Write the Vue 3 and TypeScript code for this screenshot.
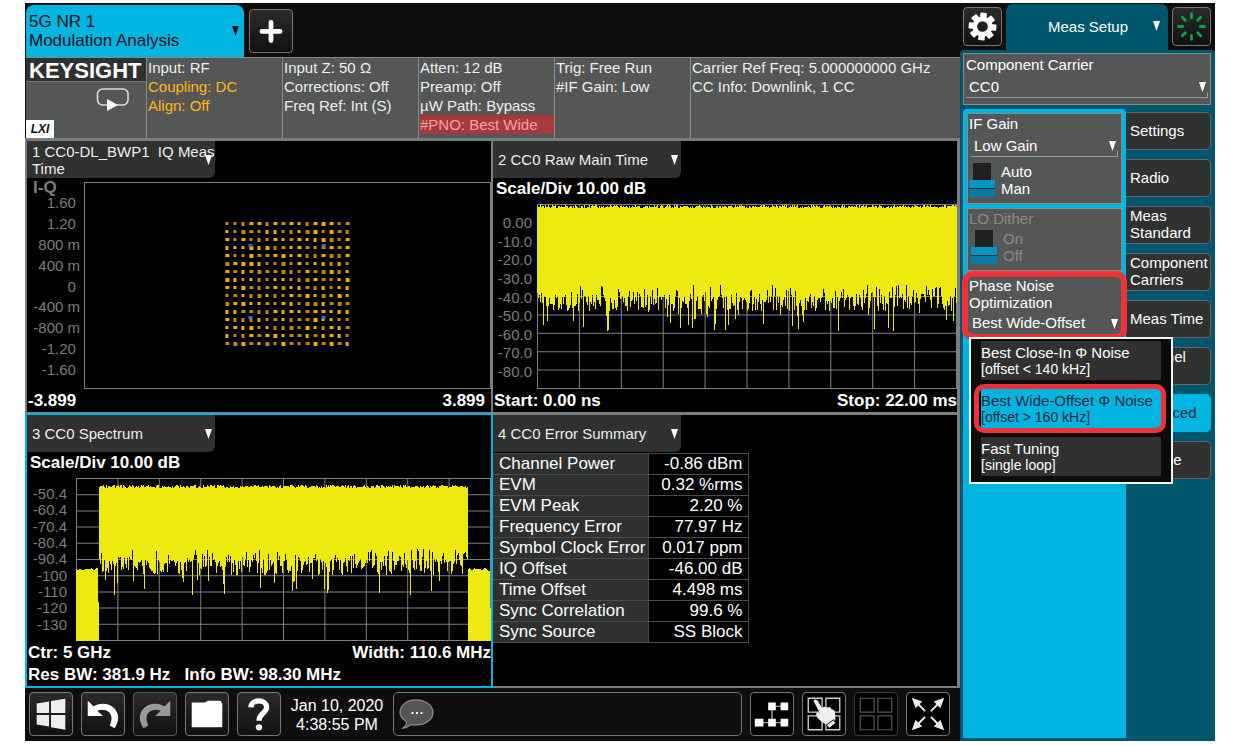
<script setup lang="ts">
import { ref } from 'vue'

interface InfoLine { text: string; tone?: 'warn' | 'alert' }

const infoCells: InfoLine[][] = [
  [{ text: 'Input: RF' }, { text: 'Coupling: DC', tone: 'warn' }, { text: 'Align: Off', tone: 'warn' }],
  [{ text: 'Input Z: 50 Ω' }, { text: 'Corrections: Off' }, { text: 'Freq Ref: Int (S)' }],
  [{ text: 'Atten: 12 dB' }, { text: 'Preamp: Off' }, { text: 'µW Path: Bypass' }, { text: '#PNO: Best Wide', tone: 'alert' }],
  [{ text: 'Trig: Free Run' }, { text: '#IF Gain: Low' }],
  [{ text: 'Carrier Ref Freq: 5.000000000 GHz' }, { text: 'CC Info: Downlink, 1 CC' }],
]

const iqLabels = ['1.60\u00a0', '1.20\u00a0', '800 m', '400 m', '0\u00a0', '-400 m', '-800 m', '-1.20\u00a0', '-1.60\u00a0']
const timeLabels = ['0.00', '-10.0', '-20.0', '-30.0', '-40.0', '-50.0', '-60.0', '-70.0', '-80.0']
const spectrumLabels = ['-50.4', '-60.4', '-70.4', '-80.4', '-90.4', '-100', '-110', '-120', '-130']

const summary: [string, string][] = [
  ['Channel Power', '-0.86 dBm'],
  ['EVM', '0.32 %rms'],
  ['EVM Peak', '2.20 %'],
  ['Frequency Error', '77.97 Hz'],
  ['Symbol Clock Error', '0.017 ppm'],
  ['IQ Offset', '-46.00 dB'],
  ['Time Offset', '4.498 ms'],
  ['Sync Correlation', '99.6 %'],
  ['Sync Source', 'SS Block'],
]

const sideTabs = ['Settings', 'Radio', 'Meas Standard', 'Component Carriers', 'Meas Time', 'Channel Setup', 'Advanced', 'Decode']
const activeTab = ref('Advanced')

const options = [
  { name: 'Best Close-In Φ Noise', note: '[offset < 140 kHz]' },
  { name: 'Best Wide-Offset Φ Noise', note: '[offset > 160 kHz]' },
  { name: 'Fast Tuning', note: '[single loop]' },
]
const chosen = ref(1)
const ifManual = ref(true)
const ditherOff = ref(true)

function makeRandom(seed: number): () => number {
  let s = seed
  return () => {
    s = (s * 1664525 + 1013904223) % 4294967296
    return s / 4294967296
  }
}

/* One-unit-wide columns: a jagged top edge and a spiky lower edge. */
function noiseBand(x0: number, x1: number, top: number, notch: number, seed: number): string {
  const rnd = makeRandom(seed)
  let path = ''
  for (let x = x0; x < x1; x += 1) {
    const y0 = top + Math.round(rnd() * 3 - 1)
    const kind = rnd()
    const depth = rnd()
    let y1 = notch + 10 + depth * 16
    if (kind < 0.28) y1 = notch + depth * 14
    else if (kind > 0.91) y1 = notch + 24 + depth * 22
    path += `M${x} ${y0}H${x + 1}V${Math.round(y1)}H${x}Z`
  }
  return path
}

function floorBand(x0: number, x1: number, top: number, bottom: number, seed: number): string {
  const rnd = makeRandom(seed)
  const pts: string[] = []
  for (let x = x0; x <= x1; x += 2) pts.push(`${x},${(top + rnd() * 3 - 1).toFixed(1)}`)
  return `M${pts.join('L')}L${x1},${bottom}L${x0},${bottom}Z`
}

const timePath = noiseBand(0, 418, 2, 81, 77)
const spectrumPath = [
  noiseBand(23, 391, 8, 71, 1234),
  floorBand(0, 23, 91, 163, 5),
  floorBand(391, 414, 91, 163, 9),
].join('')

const dotRandom = makeRandom(42)
const dots = Array.from({ length: 256 }, (_, i) => {
  const strong = dotRandom() > 0.5
  return {
    x: 141 + (i % 16) * 8,
    y: 40 + Math.floor(i / 16) * 8,
    w: dotRandom() > 0.55 ? 4 : 3,
    h: dotRandom() > 0.6 ? 4 : 3,
    fill: strong ? '#eda61d' : '#bd831a',
  }
})
const pilots = [[164, 62], [237, 62], [164, 134], [237, 134]]
const rays = [0, 45, 90, 135, 180, 225, 270, 315]
const teeth = [0, 45, 90, 135, 180, 225, 270, 315]
</script>

<template>
  <div class="analyzer">
    <main class="work">
      <header class="tabs">
        <button class="mode-tab">
          <span>5G NR 1<br>Modulation Analysis</span>
          <i class="caret"></i>
        </button>
        <button class="square" aria-label="Add screen">
          <svg viewBox="0 0 44 44"><path d="M22 13V32M12.500 22.500H31.500" stroke="#fff" stroke-width="5" stroke-linecap="round" /></svg>
        </button>
      </header>

      <section class="info">
        <div class="brand">
          <div class="brand-name">KEYSIGHT</div>
          <svg class="sweep" viewBox="0 0 34 26">
            <path d="M11 18H6.500A5 5 0 0 1 1.500 13V7A5 5 0 0 1 6.500 2H27A5 5 0 0 1 32 7V13A5 5 0 0 1 27 18H20" fill="none" stroke="#ddd" stroke-width="1.600" />
            <path d="M11 12L22 18L11 24Z" fill="#fff" />
          </svg>
          <div class="lxi">LXI</div>
        </div>
        <div v-for="(cell, c) in infoCells" :key="c" class="info-cell">
          <div v-for="line in cell" :key="line.text" :class="line.tone">{{ line.text }}</div>
        </div>
      </section>

      <section class="windows">
        <article class="window">
          <button class="title"><span>1 CC0-DL_BWP1&nbsp; IQ Meas Time</span><i class="caret"></i></button>
          <div class="plot iq">
            <div class="axis">
              <b>I-Q</b>
              <span v-for="l in iqLabels" :key="l">{{ l }}</span>
            </div>
            <svg viewBox="0 0 406 207" preserveAspectRatio="none">
              <path class="frame" d="M406 0.500H0.500V206.500H406M405.500 0V207" />
              <rect v-for="(d, i) in dots" :key="i" :x="d.x" :y="d.y" :width="d.w" :height="d.h" :fill="d.fill" />
              <rect v-for="p in pilots" :key="p.join()" :x="p[0]" :y="p[1]" width="4" height="3" fill="#2a72cc" />
            </svg>
          </div>
          <footer class="foot inset"><div><span>-3.899</span><span>3.899</span></div></footer>
        </article>

        <article class="window">
          <button class="title"><span>2 CC0 Raw Main Time</span><i class="caret"></i></button>
          <div class="scale">Scale/Div 10.00 dB</div>
          <div class="plot time">
            <div class="axis"><span v-for="l in timeLabels" :key="l">{{ l }}</span></div>
            <svg viewBox="0 0 418 185" preserveAspectRatio="none">
              <path v-for="n in 11" :key="'h' + n" class="frame" :d="`M0 ${(n - 1) * 18.4 + 0.5}H418`" />
              <path v-for="n in 11" :key="'v' + n" class="frame" :d="`M${(n - 1) * 41.700 + 0.5} 0V185`" />
              <path class="trace" :d="timePath" />
            </svg>
          </div>
          <footer class="foot"><div><span>Start: 0.00 ns</span><span>Stop: 22.00 ms</span></div></footer>
        </article>

        <article class="window active">
          <button class="title"><span>3 CC0 Spectrum</span><i class="caret"></i></button>
          <div class="scale">Scale/Div 10.00 dB</div>
          <div class="plot spectrum">
            <div class="axis"><span v-for="l in spectrumLabels" :key="l">{{ l }}</span></div>
            <svg viewBox="0 0 414 163" preserveAspectRatio="none">
              <path v-for="n in 11" :key="'h' + n" class="frame" :d="`M0 ${(n - 1) * 16.2 + 0.5}H414`" />
              <path v-for="n in 11" :key="'v' + n" class="frame" :d="`M${(n - 1) * 41.3 + 0.5} 0V163`" />
              <path class="trace" :d="spectrumPath" />
            </svg>
          </div>
          <footer class="foot">
            <div><span>Ctr: 5 GHz</span><span>Width: 110.6 MHz</span></div>
            <div><span>Res BW: 381.9 Hz&nbsp;&nbsp; Info BW: 98.30 MHz</span></div>
          </footer>
        </article>

        <article class="window">
          <button class="title"><span>4 CC0 Error Summary</span><i class="caret"></i></button>
          <table class="summary">
            <tbody>
              <tr v-for="[name, value] in summary" :key="name">
                <th scope="row">{{ name }}</th>
                <td>{{ value }}</td>
              </tr>
            </tbody>
          </table>
        </article>
      </section>

      <footer class="taskbar">
        <button class="square" aria-label="Windows">
          <svg viewBox="0 0 44 44" fill="#eee"><path d="M7 11L20 9V21H7ZM22 8.500L37 6V21H22ZM7 23H20V35L7 33ZM22 23H37V38.500L22 36Z" /></svg>
        </button>
        <button class="square" aria-label="Undo">
          <svg viewBox="0 0 44 44"><path d="M6 8L12 14C28 5 46 20 34 37L29 34C35 22 26 15 16 18.500L22 24H6Z" fill="#fff" /></svg>
        </button>
        <button class="square dim" aria-label="Redo">
          <svg viewBox="0 0 44 44"><path d="M38 8L32 14C16 5 -2 20 10 37L15 34C9 22 18 15 28 18.500L22 24H38Z" fill="#999" /></svg>
        </button>
        <button class="square" aria-label="File">
          <svg viewBox="0 0 44 44"><path d="M6 10H20L23 8H36L38 11V36H6Z" fill="#fff" /></svg>
        </button>
        <button class="square" aria-label="Help">
          <svg viewBox="0 0 44 44"><path d="M13.500 15C14 6 30 6 30 15C30 21 22 21 22 29" fill="none" stroke="#fff" stroke-width="5.500" /><circle cx="22" cy="36" r="3.300" fill="#fff" /></svg>
        </button>
        <time>Jan 10, 2020<br>4:38:55 PM</time>
        <div class="message">
          <svg viewBox="0 0 44 44">
            <path d="M9 36C12 34 13 32 12.500 29.500C8 27 6 24 6 20.500C6 13 13 8 22 8C31 8 39 13 39 20.500C39 28 31 33 22 33C20 33 18 33 17 32.500C14 35 12 36 9 36Z" fill="#555" stroke="#888" stroke-width="1.300" />
            <path d="M17.500 21H19.500M22 21H24M26.500 21H28.500" stroke="#fff" stroke-width="2" />
          </svg>
        </div>
        <button class="square black" aria-label="Sequence layout">
          <svg viewBox="0 0 44 44"><path d="M22 14H36M22 14V31M8 31H36" stroke="#aaa" stroke-width="1.500" fill="none" /><path d="M18 10H26V18H18ZM31 10H39V18H31ZM4 27H13V35H4ZM18 27H26V35H18ZM31 27H39V35H31Z" fill="#fff" /></svg>
        </button>
        <button class="square black" aria-label="Select window">
          <svg viewBox="0 0 44 44"><path d="M5.500 5.500H20V20H5.500ZM24 5.500H38.500V20H24ZM5.500 24H20V38.500H5.500ZM24 24H38.500V38.500H24Z" fill="none" stroke="#ccc" stroke-width="1.400" /><path d="M11 8C12 6 15 7 16 9L20 16C22 14 24 14 25 15.500C27 14 29 15 30 17C32 17 33 18 33.500 20L34 28L27 34C22 32 16 28 14 24C13 20 16 19 18 22Z" fill="#eee" /><path d="M24.500 33.500L32 28L34.500 31.500L27.500 37Z" fill="#eee" stroke="#000" /></svg>
        </button>
        <button class="square black faint" aria-label="Window grid">
          <svg viewBox="0 0 44 44"><path d="M5.500 5.500H20V20H5.500ZM24 5.500H38.500V20H24ZM5.500 24H20V38.500H5.500ZM24 24H38.500V38.500H24Z" fill="none" stroke="#555" stroke-width="1.300" /></svg>
        </button>
        <button class="square black" aria-label="Full screen">
          <svg viewBox="0 0 44 44"><path d="M10 10L19 19M34 10L25 19M10 34L19 25M34 34L25 25" stroke="#eee" stroke-width="2" /><path d="M5 5L16 9L9 16ZM39 5L35 16L28 9ZM5 39L9 28L16 35ZM39 39L28 35L35 28Z" fill="#eee" /></svg>
        </button>
      </footer>
    </main>

    <aside class="menu">
      <header class="menu-head">
        <button class="square small" aria-label="System settings">
          <svg viewBox="0 0 40 40">
            <rect v-for="t in teeth" :key="t" x="16.500" y="5" width="7" height="8" rx="1" fill="#fff" :transform="`rotate(${t + 5} 20 20)`" />
            <circle cx="20" cy="20" r="8.300" fill="none" stroke="#fff" stroke-width="5" />
          </svg>
        </button>
        <button class="menu-tab"><span>Meas Setup</span><i class="caret"></i></button>
        <button class="square small" aria-label="Measuring">
          <svg viewBox="0 0 40 40"><path v-for="r in rays" :key="r" d="M20 6V10.500" stroke="#00a64f" stroke-width="3" stroke-linecap="round" :transform="`rotate(${r} 20 20)`" /></svg>
        </button>
      </header>

      <div class="menu-body">
        <section class="box carrier">
          <label for="carrier">Component Carrier</label>
          <div class="pick"><select id="carrier"><option>CC0</option></select><i class="caret"></i></div>
        </section>
        <div class="columns">
          <div class="settings">
            <section class="box gain">
              <label for="gain">IF Gain</label>
              <div class="pick"><select id="gain"><option>Low Gain</option></select><i class="caret"></i></div>
              <label class="toggle"><input v-model="ifManual" type="checkbox"><span>Auto<br>Man</span></label>
            </section>
            <section class="box dither">
              <div>LO Dither</div>
              <label class="toggle"><input v-model="ditherOff" type="checkbox" disabled><span>On<br>Off</span></label>
            </section>
            <section class="box noise">
              <label for="noise">Phase Noise Optimization</label>
              <div class="pick"><select id="noise"><option>Best Wide-Offset</option></select><i class="caret"></i></div>
              <div class="popup">
                <button v-for="(o, i) in options" :key="o.name" :class="{ chosen: i === chosen }" @click="chosen = i">
                  <span>{{ o.name }}</span><small>{{ o.note }}</small>
                </button>
              </div>
            </section>
          </div>
          <nav class="side">
            <button v-for="t in sideTabs" :key="t" :class="{ on: t === activeTab }" @click="activeTab = t">{{ t }}</button>
          </nav>
        </div>
      </div>
    </aside>
  </div>
</template>

<style>
body { margin: 0; background: #fff; }
</style>

<style scoped>
* { box-sizing: border-box; }
.analyzer {
  display: flex;
  min-height: 100vh;
  padding: 3px 36px 5px 25px;
  font: 15px/17px "Liberation Sans", Arial, sans-serif;
  color: #fff;
}
button, select { font: inherit; color: inherit; margin: 0; }
button { cursor: pointer; text-align: left; }
svg { display: block; }
.work { flex: 1; min-width: 0; display: flex; flex-direction: column; background: #0e0e0e; }
.caret {
  flex: none;
  width: 7px;
  height: 10px;
  background: currentColor;
  clip-path: polygon(0 0, 100% 0, 50% 100%);
}

.tabs { display: flex; gap: 5px; height: 54px; padding: 2px 1px 0; }
.mode-tab {
  display: flex;
  align-items: center;
  justify-content: space-between;
  width: 218px;
  padding: 0 5px 0 3px;
  border: 0;
  border-radius: 8px 8px 0 0;
  background: #00b5e2;
  color: #101010;
  font-size: 17px;
  line-height: 19px;
}
.square {
  flex: none;
  width: 44px;
  height: 44px;
  padding: 0;
  border: 1px solid #777;
  border-radius: 4px;
  background: linear-gradient(#2b2b2b, #111);
}
.square svg { width: 100%; height: 100%; }
.tabs .square { margin-top: 4px; }
.square.dim { border-color: #555; }
.square.black { background: #000; }
.square.faint { border-color: #3a3a3a; }

.info { display: flex; height: 81px; background: #555756; border-top: 1px solid #888; margin-left: 1px; }
.brand { width: 120px; display: flex; flex-direction: column; }
.brand-name { height: 24px; padding-left: 3px; font-size: 22px; line-height: 25px; font-weight: bold; background: #2f3030; border-bottom: 1px solid #777; }
.sweep { width: 34px; height: 26px; margin: 5px 0 0 70px; }
.lxi { margin-top: auto; width: 28px; height: 18px; background: #fff; color: #111; font-size: 12px; line-height: 18px; font-weight: bold; font-style: italic; text-align: center; }
.info-cell { width: 136px; padding-left: 1px; border-left: 1px solid #8a8a8a; line-height: 19px; white-space: nowrap; color: #eee; }
.info-cell:last-child { flex: 1; }
.warn { color: #fdb913; }
.alert { background: #a63a3d; color: #f6a3a5; border-radius: 2px; }

.windows {
  flex: 1;
  display: grid;
  grid-template: repeat(2, minmax(0, 1fr)) / repeat(2, minmax(0, 1fr));
  gap: 3px 2px;
  padding: 3px 3px 2px 2px;
  background: #7c7d7d;
}
.window { display: flex; flex-direction: column; background: #000; min-width: 0; }
.window.active { outline: 2px solid #00b5e2; z-index: 1; }
.title {
  position: relative;
  width: 188px;
  height: 37px;
  padding: 0 0 0 5px;
  border: 0;
  border-radius: 0 0 6px 0;
  background: #303131;
  color: #eee;
}
.title span { display: block; }
.title .caret { position: absolute; right: 3px; top: 14px; color: #fff; }
.scale { height: 26px; padding-left: 3px; font-size: 17px; font-weight: bold; line-height: 22px; }
.plot { flex: 1; min-height: 0; display: grid; }
.plot svg { width: 100%; height: 100%; contain: size; overflow: hidden; }
.iq { margin-top: 4px; grid-template-columns: 57px 1fr; }
.time { grid-template-columns: 44px 1fr; }
.spectrum { grid-template-columns: 49px 1fr; }
.axis { display: flex; flex-direction: column; padding: 10px 0 8px; color: #7c7c7c; line-height: 14px; text-align: right; min-height: 0; }
.axis span { flex: 1; display: flex; align-items: center; justify-content: flex-end; white-space: pre; min-height: 0; }
.iq .axis { padding: 1px 4px 9px 6px; }
.axis b { height: 10px; line-height: 10px; font-size: 17px; text-align: left; }
.time .axis { padding-right: 5px; }
.spectrum .axis { padding: 8px 9px 8px 0; }
.frame { fill: none; stroke: #808080; stroke-width: 1; }
.trace { fill: #eeea10; shape-rendering: crispEdges; }
.foot { padding: 1px 0 0 1px; font-size: 17px; font-weight: bold; }
.foot.inset { padding-right: 6px; }
.foot div { display: flex; justify-content: space-between; line-height: 22px; white-space: nowrap; }

.summary { margin-top: 1px; align-self: flex-start; border-collapse: collapse; font-size: 17px; line-height: 20px; }
.summary th { width: 155px; padding: 0 0 0 6px; background: #2f3030; font-weight: normal; text-align: left; }
.summary td { width: 100px; padding: 0 5px 0 0; text-align: right; }
.summary th, .summary td { border: 1px solid #4a4a4a; border-left-width: 0; white-space: nowrap; }

.taskbar { display: flex; gap: 8px; height: 53px; padding: 4px 10px 0 4px; }
.taskbar time { width: 96px; font-size: 16px; line-height: 19px; text-align: center; padding-top: 4px; white-space: nowrap; }
.message { flex: 1; height: 44px; border: 1px solid #777; border-radius: 5px; }
.message svg { width: 44px; height: 44px; margin-top: -1px; }

.menu { width: 255px; flex: none; display: flex; flex-direction: column; background: #0e0e0e; }
.menu-head { display: flex; justify-content: space-between; height: 47px; padding: 1px 4px 0 3px; }
.square.small { width: 39px; height: 39px; margin-top: 3px; }
.menu-tab {
  display: flex;
  align-items: center;
  justify-content: flex-end;
  gap: 25px;
  width: 162px;
  padding: 0 8px 2px 0;
  border: 0;
  border-radius: 7px 7px 0 0;
  background: #00566d;
}
.menu-body { flex: 1; display: flex; flex-direction: column; padding: 3px 4px 3px 3px; background: #00566d; border-radius: 4px 4px 0 0; }
.box { border: 1px solid #8a8a8a; background: #555756; }
.box > label { display: block; }
.pick { position: relative; }
.pick select {
  display: block;
  appearance: none;
  width: 100%;
  height: 22px;
  padding: 0 0 0 3px;
  border: 0;
  border-bottom: 1px solid #999;
  border-radius: 0;
  background: linear-gradient(#999, #999) right bottom / 1px 5px no-repeat;
}
.pick .caret { position: absolute; right: 2px; top: 6px; }
.carrier { height: 52px; padding: 2px 2px; }
.carrier .pick { margin-top: 3px; }
.columns { flex: 1; display: flex; margin-top: 4px; }
.settings { width: 163px; padding: 4px; background: #00b5e2; border-radius: 4px 4px 0 0; }
.gain { height: 91px; padding: 1px 3px 0 1px; }
.gain .pick { margin: 3px 0 6px 2px; }
.box > .toggle { display: flex; gap: 6px; }
.toggle input {
  flex: none;
  appearance: none;
  margin: 0;
  width: 26px;
  height: 34px;
  background:
    linear-gradient(#0a94c4 0 8px, #07303f 8px 9px, #087ba5 9px) left bottom / 26px 17px no-repeat,
    linear-gradient(#1f2020, #1f2020) 4px top / 18px 17px no-repeat;
}
.dither { margin-top: 4px; height: 63px; padding: 1px 1px 0; color: #8a8a8a; }
.box.dither > .toggle { margin: 3px 0 0 2px; }
.noise { position: relative; margin: 0 -5px; height: 69px; padding: 0 1px; border: 6px solid #ee3338; border-radius: 11px; }
.noise .pick select { border-bottom-color: transparent; background: none; height: 24px; padding-left: 3px; }
.noise .pick .caret { top: 8px; }
.popup {
  position: absolute;
  z-index: 2;
  left: 1px;
  top: 60px;
  width: 204px;
  display: grid;
  gap: 9px;
  padding: 2px 10px 6px;
  border: 2px solid #f4f4f4;
  background: #0c0c0c;
}
.popup button { position: relative; height: 39px; padding: 0; border: 0; background: #303131; white-space: nowrap; }
.popup span, .popup small { display: block; font-size: 15px; line-height: 17px; }
.popup small { font-size: 14px; }
.popup .chosen { background: #00b5e2; color: #062a3a; }
.popup .chosen::after { content: ""; position: absolute; inset: -5px -5px -5px -7px; border: 5px solid #ee3338; border-radius: 10px; }
.side { flex: 1; display: flex; flex-direction: column; gap: 9px; padding-top: 3px; }
.side button { height: 38px; padding: 0 0 2px 4px; border: 1px solid #666; border-left: 0; border-radius: 0 5px 5px 0; background: #303131; }
.side .on { background: #00b5e2; color: #0b2a38; border-color: #00b5e2; }
</style>
